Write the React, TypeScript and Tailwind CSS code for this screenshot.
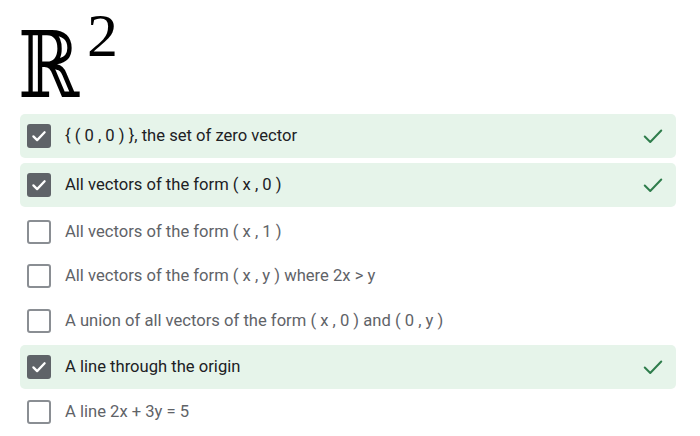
import React from "react";

const items: { text: string; checked: boolean; mt: string }[] = [
  { text: "{ ( 0 , 0 ) }, the set of zero vector", checked: true, mt: "mt-0" },
  { text: "All vectors of the form ( x , 0 )", checked: true, mt: "mt-[5px]" },
  { text: "All vectors of the form ( x , 1 )", checked: false, mt: "mt-[3px]" },
  { text: "All vectors of the form ( x , y ) where 2x > y", checked: false, mt: "mt-0" },
  { text: "A union of all vectors of the form ( x , 0 ) and ( 0 , y )", checked: false, mt: "mt-[1px]" },
  { text: "A line through the origin", checked: true, mt: "mt-[2px]" },
  { text: "A line 2x + 3y = 5", checked: false, mt: "mt-[1px]" },
];

function Box({ checked }: { checked: boolean }) {
  if (checked) {
    return (
      <div className="w-[24px] h-[24px] rounded-[3px] bg-[#5f6368] flex items-center justify-center shrink-0">
        <svg width="18" height="18" viewBox="0 0 24 24" fill="none">
          <path d="M4.5 12.5l5 5L19.5 7" stroke="#fff" strokeWidth="3" strokeLinecap="round" strokeLinejoin="round" />
        </svg>
      </div>
    );
  }
  return <div className="w-[24px] h-[24px] rounded-[3px] border-2 border-[#8a8e93] shrink-0" />;
}

export default function App() {
  return (
    <div className="w-[700px] h-[436px] bg-white overflow-hidden relative" style={{ fontFamily: "Roboto, 'Noto Sans', sans-serif" }}>
      <div className="h-[114px] relative">
        <span className="absolute left-[18px] top-[20px] text-[92px] leading-none text-black scale-x-[0.8] origin-left" style={{ fontFamily: "'DejaVu Serif', serif" }}>ℝ</span>
        <span className="absolute left-[87px] top-[4px] text-[62px] leading-none text-black" style={{ fontFamily: "'Liberation Serif', serif" }}>2</span>
      </div>
      <div className="flex flex-col px-[20px] w-[696px]">
        {items.map((it, i) => (
          <div
            key={i}
            className={`${it.mt} h-[44px] rounded-[5px] flex items-center pl-[7px] pr-[12px] ${it.checked ? "bg-[#e6f4ea]" : ""}`}
          >
            <Box checked={it.checked} />
            <span className={`ml-[14px] text-[16.6px] flex-1 whitespace-pre ${it.checked ? "text-[#202124]" : "text-[#5f6368]"}`}>{it.text}</span>
            {it.checked && (
              <svg width="22" height="22" viewBox="0 0 24 24" fill="none">
                <path d="M3 12.5l6 6L21 6" stroke="#2f7d4c" strokeWidth="2.2" strokeLinecap="round" strokeLinejoin="round" />
              </svg>
            )}
          </div>
        ))}
      </div>
    </div>
  );
}
